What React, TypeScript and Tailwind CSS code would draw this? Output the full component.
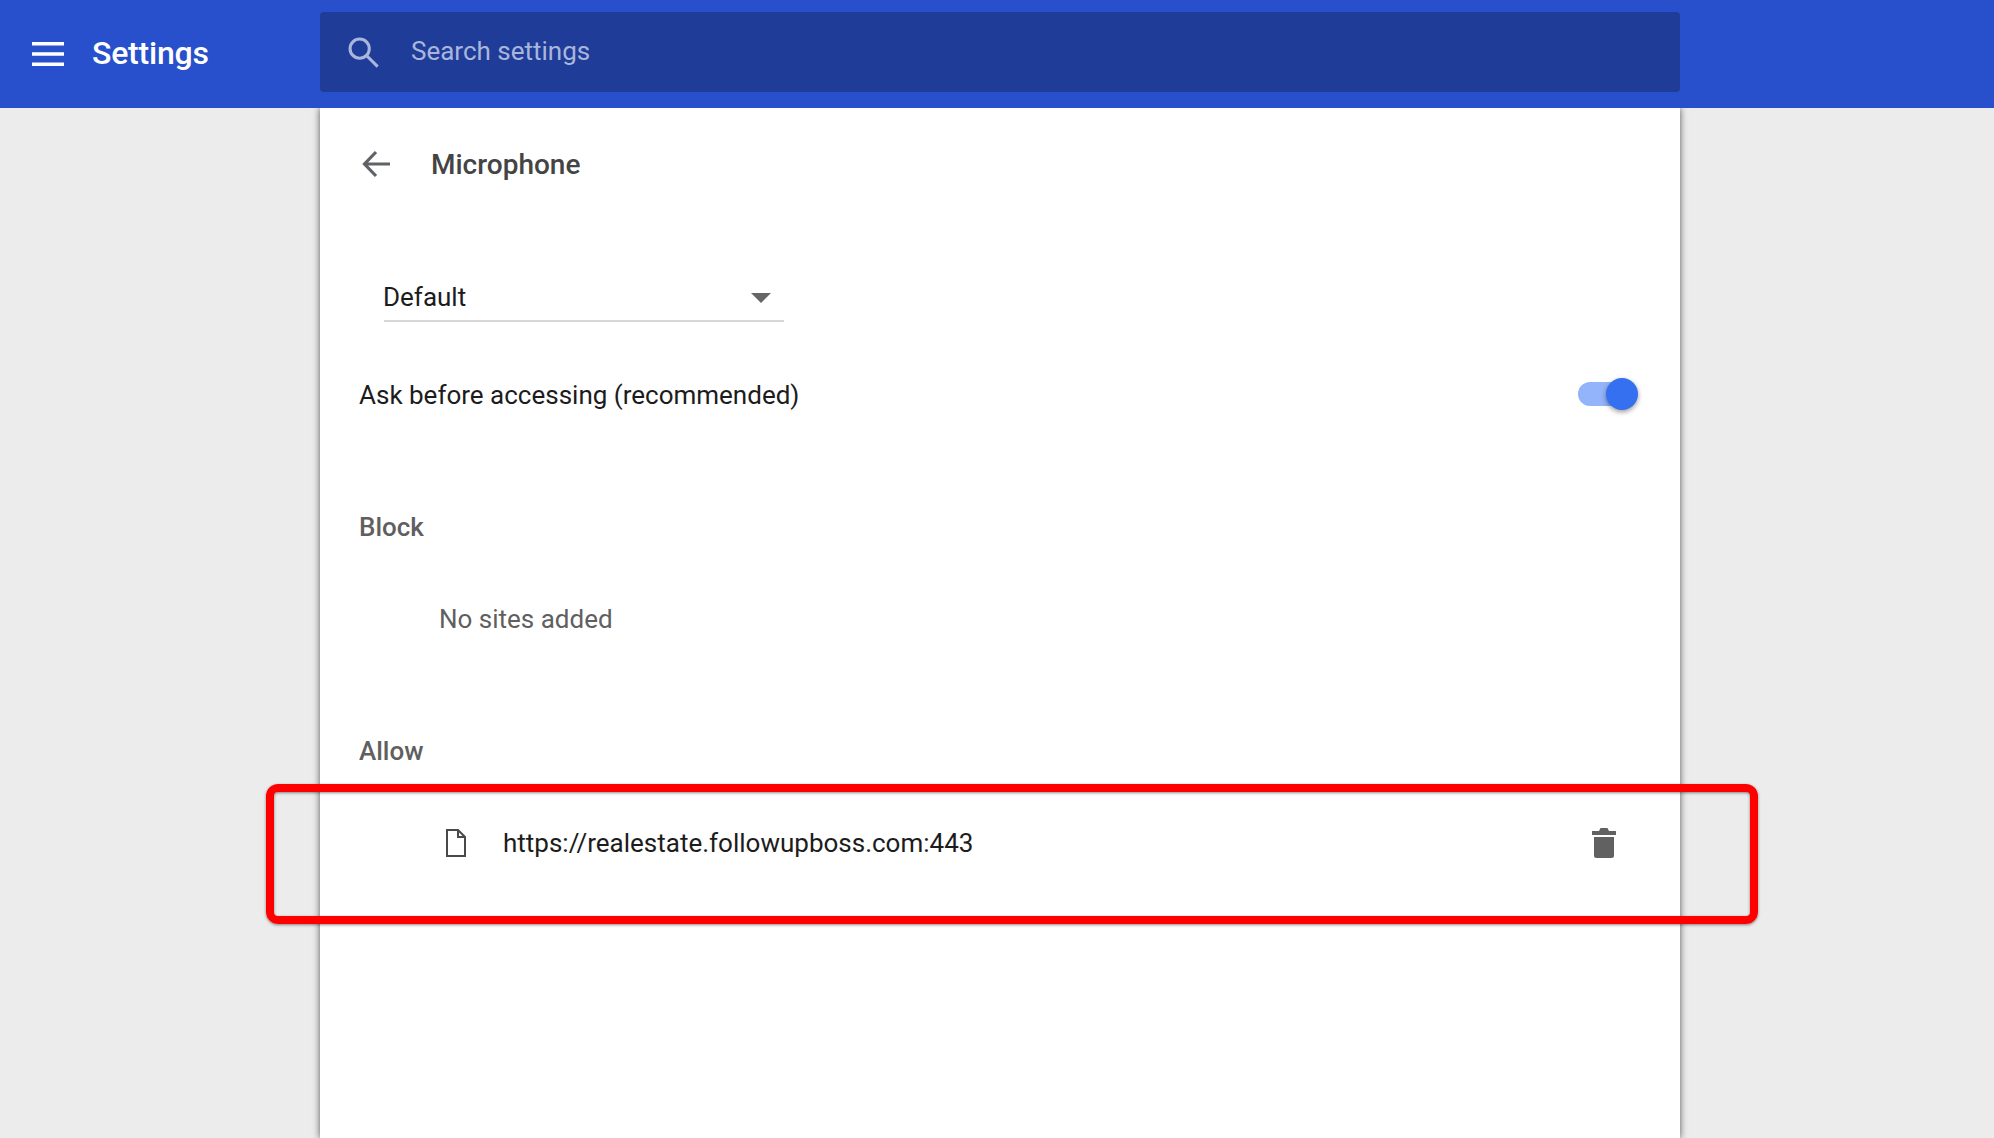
const ROBOTO = "font-['Roboto',sans-serif]";

function MenuIcon() {
  return (
    <svg className="w-8 h-6 text-white" viewBox="0 0 32 24" fill="currentColor" aria-hidden="true">
      <path d="M0 0h32v3.6H0zM0 10.2h32v3.6H0zM0 20.4h32V24H0z" />
    </svg>
  );
}

function SearchIcon() {
  return (
    <svg className="w-8 h-8 text-[#a9b6dc]" viewBox="0 0 24 24" fill="none" stroke="currentColor" strokeWidth="2.3" aria-hidden="true">
      <circle cx="9.5" cy="9.5" r="7.2" />
      <path d="M14.8 14.8 23 23" />
    </svg>
  );
}

function BackIcon() {
  return (
    <svg className="w-7 h-7 text-[#5f6368]" viewBox="0 0 28 28" fill="none" stroke="currentColor" strokeWidth="3.2" aria-hidden="true">
      <path d="M28 14H3M14 2 2.5 14 14 26" />
    </svg>
  );
}

function FileIcon() {
  return (
    <svg className="w-5 h-7 text-[#4a4a4a]" viewBox="0 0 20 28" fill="none" stroke="currentColor" strokeWidth="2" aria-hidden="true">
      <path d="M1 1h11l7 7v19H1zM12 1v7h7" />
    </svg>
  );
}

function TrashIcon() {
  return (
    <svg className="w-6 h-[30px] text-[#616161]" viewBox="0 0 24 30" fill="currentColor" aria-hidden="true">
      <path d="M0 3h7l1.5-3h7L17 3h7v4H0zM2 9h20v18.5a2.5 2.5 0 0 1-2.5 2.5h-15A2.5 2.5 0 0 1 2 27.5z" />
    </svg>
  );
}

function Toggle() {
  return (
    <div className="relative w-[60px] h-8 mr-[42px] -translate-y-px">
      <div className="absolute left-0 top-1 w-[47px] h-6 rounded-full bg-[#93b3fa]" />
      <div className="absolute right-0 top-0 w-8 h-8 rounded-full bg-[#3570f0] shadow-[0_2px_5px_rgba(0,0,0,0.4)]" />
    </div>
  );
}

export default function App() {
  return (
    <div className={`relative h-screen overflow-hidden flex flex-col bg-[#ececec] ${ROBOTO}`}>
      <header className="relative z-10 h-[108px] shrink-0 flex items-center bg-[#2850cc]">
        <div className="w-[320px] flex items-center pl-8">
          <MenuIcon />
          <span className="ml-7 mb-0.5 text-[32px] font-medium tracking-[-0.2px] text-white">Settings</span>
        </div>
        <div className="w-[1360px] h-20 mb-1 flex items-center pl-[27px] rounded bg-[#1f3c99]">
          <SearchIcon />
          <span className="ml-8 mb-0.5 text-[26px] text-[#a9b6dc]">Search settings</span>
        </div>
      </header>

      <main className="flex-1 ml-[320px] w-[1360px] bg-white shadow-[0_0_7px_rgba(0,0,0,0.65)]">
        <div className="h-[112px] flex items-center pl-[42px]">
          <BackIcon />
          <h1 className="ml-[41px] mt-0.5 text-[28px] font-medium text-[#444]">Microphone</h1>
        </div>

        <div className="mt-[52px] ml-16 w-[400px] h-[50px] flex items-center justify-between border-b-2 border-[#d6d6d6] pr-[13px]">
          <span className="mt-0.5 -ml-px text-[26px] text-[#1c1c1c]">Default</span>
          <div className="mt-1 w-0 h-0 border-x-[10px] border-x-transparent border-t-[10px] border-t-[#666]" />
        </div>

        <div className="mt-7 h-[90px] flex items-center justify-between pl-[39px]">
          <span className="text-[26px] text-[#1c1c1c]">Ask before accessing (recommended)</span>
          <Toggle />
        </div>

        <div className="mt-[42px] h-[90px] flex items-center pl-[39px]">
          <h2 className="text-[26px] font-medium text-[#5f5f5f]">Block</h2>
        </div>
        <div className="mt-0.5 h-[90px] flex items-center pl-[119px]">
          <span className="text-[26px] text-[#5f5f5f]">No sites added</span>
        </div>

        <div className="mt-[42px] h-[90px] flex items-center pl-[39px]">
          <h2 className="text-[26px] font-medium text-[#5f5f5f]">Allow</h2>
        </div>
        <div className="h-[94px] flex items-center justify-between pl-[126px] pr-16">
          <div className="flex items-center">
            <FileIcon />
            <span className="ml-[37px] text-[26px] text-[#1c1c1c]">https://realestate.followupboss.com:443</span>
          </div>
          <TrashIcon />
        </div>
      </main>

      <div className="absolute z-20 left-[266px] top-[784px] w-[1492px] h-[140px] rounded-xl border-8 border-[#ff0000] shadow-[0_1px_3px_rgba(0,0,0,0.45),inset_0_1px_3px_rgba(0,0,0,0.45)]" />
    </div>
  );
}
